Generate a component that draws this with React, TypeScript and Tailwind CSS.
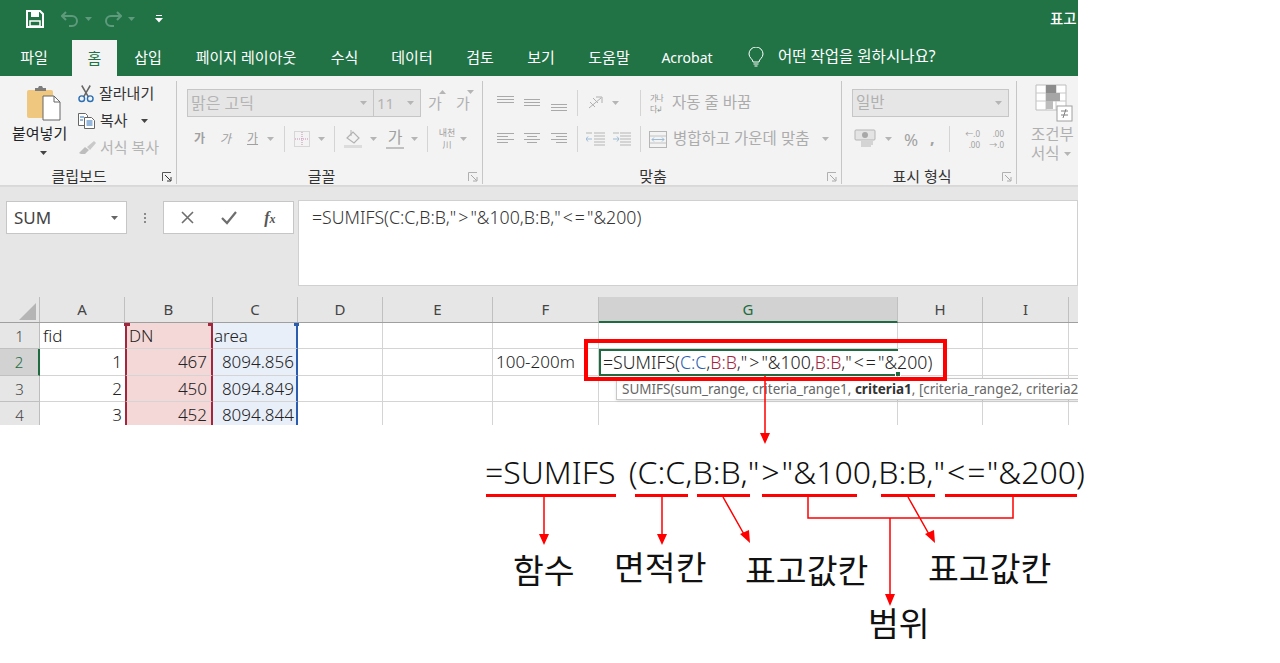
import type { ReactNode } from 'react';

const sans = 'font-["Noto_Sans","Noto_Sans_CJK_KR",sans-serif]';

function Caret({ className = 'text-[#b5b5b5]' }: { className?: string }) {
  return (
    <svg width="7" height="4" viewBox="0 0 7 4" className={`shrink-0 ${className}`}>
      <path d="M0 0h7L3.5 4z" fill="currentColor" />
    </svg>
  );
}

function Launcher({ dark = false }: { dark?: boolean }) {
  const c = dark ? '#555' : '#b0b0b0';
  return (
    <svg width="10" height="10" viewBox="0 0 10 10" className="shrink-0">
      <path d="M.5 9V.5H9" fill="none" stroke={c} />
      <path d="M3 3l5.5 5.5M9 5v4H5" fill="none" stroke={dark ? '#333' : '#a8a8a8'} />
    </svg>
  );
}

function Sep({ h = 'h-[26px]' }: { h?: string }) {
  return <div className={`w-px ${h} bg-[#d4d4d4] shrink-0`} />;
}

function Lines({ rows }: { rows: number[][] }) {
  return (
    <svg width="18" height="18" viewBox="0 0 18 18" className="shrink-0">
      {rows.map(([x, y, w], i) => (
        <rect key={i} x={x} y={y} width={w} height="1" fill="#a9a9a9" />
      ))}
    </svg>
  );
}

function Group({ width, label, dark, children, labelPad = 0 }: {
  width: string; label?: string; dark?: boolean; children: ReactNode; labelPad?: number;
}) {
  return (
    <div className={`${width} h-[103px] mt-[5px] shrink-0 border-r border-[#c6c6c6] flex flex-col`}>
      <div className="flex-1 min-h-0">{children}</div>
      <div className="h-[16px] flex items-center">
        <span className="flex-1 text-center text-[15px] leading-[16px] text-[#333]" style={{ paddingRight: labelPad }}>{label}</span>
        <span className="mr-[4px] mt-[2px]"><Launcher dark={dark} /></span>
      </div>
    </div>
  );
}

function ClipboardGroup() {
  return (
    <Group width="w-[177px]" label="클립보드" dark labelPad={4}>
      <div className="flex h-full">
        <div className="w-[75px] pl-[12px] flex flex-col">
          <svg width="36" height="36" viewBox="0 0 36 36" className="ml-[14px] mt-[4px]">
            <rect x="1" y="5" width="26" height="28" rx="2" fill="#efc77f" />
            <path d="M9 6V3h3l1-2h3l1 2h3v3z" fill="#7d7d7d" />
            <path d="M17 11h11l6 6v18H17z" fill="#fff" stroke="#666" />
            <path d="M28 11v6h6" fill="none" stroke="#666" />
          </svg>
          <div className="text-[15px] leading-[18px] mt-[3px] text-[#222] whitespace-nowrap">붙여넣기</div>
          <div className="ml-[28px] mt-[9px]"><Caret className="text-[#444]" /></div>
        </div>
        <div className="flex flex-col gap-[4px] ml-[3px] mt-[1px]">
          <div className="flex items-center gap-[5px] h-[23px] text-[15px] text-[#333]">
            <svg width="16" height="19" viewBox="0 0 17 19">
              <path d="M4 1l7 12M13 1L6 13" stroke="#666" strokeWidth="1.6" fill="none" />
              <circle cx="4" cy="15" r="3" fill="none" stroke="#2a6fb5" strokeWidth="1.5" />
              <circle cx="13" cy="15" r="3" fill="none" stroke="#2a6fb5" strokeWidth="1.5" />
            </svg>
            잘라내기
          </div>
          <div className="flex items-center gap-[5px] h-[23px] text-[15px] text-[#333]">
            <svg width="17" height="16" viewBox="0 0 17 16">
              <path d="M.5.5h7l2 2v10h-9z" fill="#fff" stroke="#666" />
              <path d="M6.5 4.5h7l3 3v8h-10z" fill="#fff" stroke="#666" />
              <path d="M2 4h4M2 7h3M8.500 8h6M8.500 10h6M8.500 12h6" stroke="#2a6fb5" />
            </svg>
            복사
            <span className="ml-[8px]"><Caret className="text-[#444]" /></span>
          </div>
          <div className="flex items-center gap-[3px] h-[23px] text-[15px] text-[#b4b4b4]">
            <svg width="19" height="15" viewBox="0 0 19 15">
              <path d="M1 13l6-6 4 3-4 4H3z" fill="#bdbdbd" />
              <path d="M9 7l7-6 2 2-6 7z" fill="#c9c9c9" />
            </svg>
            서식 복사
          </div>
        </div>
      </div>
    </Group>
  );
}

function FontGroup() {
  return (
    <Group width="w-[306px]" label="글꼴" labelPad={2}>
      <div className="pl-[10px] pt-[8px]">
        <div className="flex items-center h-[28px]">
          <div className="w-[187px] h-[28px] bg-[#e6e6e6] border border-[#c6c6c6] flex items-center justify-between px-[3px] pr-[6px] text-[16px] text-[#b4b4b4]">
            맑은 고딕<Caret />
          </div>
          <div className="w-[47px] h-[28px] bg-[#e6e6e6] border border-l-0 border-[#c6c6c6] flex items-center justify-between pl-[3px] pr-[6px] text-[15px] text-[#b4b4b4]">
            11<Caret />
          </div>
          <div className="flex items-center gap-[12px] ml-[7px] text-[#b0b0b0] text-[15px]">
            <span className="relative w-[16px]">가<span className="absolute -top-[2px] left-[11px]"><svg width="7" height="4" className="block"><path d="M0 4h7L3.500 0z" fill="#b5b5b5" /></svg></span></span>
            <span className="relative w-[16px]">가<span className="absolute -top-[2px] left-[11px]"><Caret /></span></span>
          </div>
        </div>
        <div className="flex items-center h-[28px] mt-[8px] text-[#a0a0a0] text-[12px]">
          <span className="ml-[7px] w-[12px] font-bold">가</span>
          <span className="ml-[14px] w-[12px] italic">가</span>
          <span className="ml-[15px] w-[13px] underline text-[12px]">가</span>
          <span className="ml-[7px]"><Caret /></span>
          <span className="ml-[10px]"><Sep /></span>
          <svg width="16" height="16" viewBox="0 0 16 16" className="ml-[9px]">
            <rect x=".5" y=".5" width="15" height="15" fill="none" stroke="#bbb" strokeDasharray="1 1" />
            <path d="M8 1v14M1 8h14" stroke="#c48fb0" strokeDasharray="1 1" />
          </svg>
          <span className="ml-[8px]"><Caret /></span>
          <span className="ml-[9px]"><Sep /></span>
          <svg width="19" height="20" viewBox="0 0 19 20" className="ml-[9px]">
            <path d="M3 9l6-6 6 6-5 5z" fill="none" stroke="#b2b2b2" strokeWidth="1.200" />
            <path d="M7 1v6" stroke="#b2b2b2" />
            <rect x="0" y="16" width="18" height="3" fill="#dcdcdc" />
          </svg>
          <span className="ml-[7px]"><Caret /></span>
          <span className="ml-[9px] flex flex-col items-center w-[18px] text-[16px] leading-[17px]">가<span className="w-full h-[2px] bg-[#c0c0c0] mt-[1px]" /></span>
          <span className="ml-[7px]"><Caret /></span>
          <span className="ml-[9px]"><Sep /></span>
          <span className="ml-[10px] w-[18px] text-[9px] leading-[12px] text-center">내천<br />川</span>
          <span className="ml-[4px]"><Caret /></span>
        </div>
      </div>
    </Group>
  );
}

function AlignGroup() {
  const top = [[0, 2, 17], [0, 5, 17], [0, 8, 17]];
  const mid = [[0, 5, 16], [0, 8, 16], [0, 11, 16]];
  const bot = [[0, 10, 16], [0, 13, 16], [0, 16, 16]];
  const l = [[0, 3, 17], [0, 6, 11], [0, 9, 17], [0, 12, 11]];
  const c = [[0, 3, 16], [3, 6, 10], [0, 9, 16], [3, 12, 10]];
  const r = [[0, 3, 16], [5, 6, 11], [0, 9, 16], [5, 12, 11]];
  return (
    <Group width="w-[359px]" label="맞춤" labelPad={4}>
      <div className="pl-[14px] pt-[8px] text-[15.5px] text-[#acacac]">
        <div className="flex items-center h-[28px]">
          <div className="flex gap-[9px] w-[80px]"><Lines rows={top} /><Lines rows={mid} /><Lines rows={bot} /></div>
          <Sep />
          <svg width="20" height="20" viewBox="0 0 20 20" className="ml-[9px]">
            <path d="M2 15L14 5M9 4h6v6M3 9l5 5M6 5l5 5" fill="none" stroke="#b0b0b0" />
          </svg>
          <span className="ml-[5px] w-[28px]"><Caret /></span>
          <Sep />
          <span className="ml-[9px] w-[16px] text-[8px] leading-[11px] tracking-[-1px] text-[#999] whitespace-nowrap overflow-hidden">가나<br />다↲</span>
          <span className="ml-[6px] whitespace-nowrap">자동 줄 바꿈</span>
        </div>
        <div className="flex items-center h-[28px] mt-[8px]">
          <div className="flex gap-[9px] w-[80px]"><Lines rows={l} /><Lines rows={c} /><Lines rows={r} /></div>
          <Sep />
          <svg width="45" height="16" viewBox="0 0 45 16" className="ml-[8px]">
            <path d="M8 2h11M8 5h11M8 8h11M8 11h11M8 14h11M34 2h11M34 5h11M34 8h11M34 11h11M34 14h11M0 2h6M27 2h6" stroke="#b5b5b5" />
            <path d="M0 8h6M2 5.500L0 8l2 2.500M27 8h6M31 5.500L33 8l-2 2.500" fill="none" stroke="#9dbbd6" />
          </svg>
          <span className="ml-[9px]"><Sep /></span>
          <svg width="18" height="17" viewBox="0 0 18 17" className="ml-[8px]">
            <rect x=".5" y=".5" width="17" height="16" fill="none" stroke="#b5b5b5" />
            <path d="M1 5h16M1 12h16" stroke="#c2c2c2" />
            <path d="M3 8.500h12M5 6.500l-2 2 2 2M13 6.500l2 2-2 2" fill="none" stroke="#9dbbd6" />
          </svg>
          <span className="ml-[6px] whitespace-nowrap">병합하고 가운데 맞춤</span>
          <span className="ml-[13px]"><Caret /></span>
        </div>
      </div>
    </Group>
  );
}

function NumberGroup() {
  return (
    <Group width="w-[175px]" label="표시 형식">
      <div className="pl-[10px] pt-[8px] text-[#b0b0b0]">
        <div className="w-[157px] h-[28px] bg-[#e6e6e6] border border-[#c6c6c6] flex items-center justify-between pl-[3px] pr-[6px] text-[15.5px]">
          일반<Caret />
        </div>
        <div className="flex items-center h-[28px] mt-[8px]">
          <svg width="24" height="20" viewBox="0 0 24 20" className="ml-[2px]">
            <rect x="1" y="1" width="20" height="10" rx="1" fill="#e4e4e4" stroke="#b5b5b5" />
            <circle cx="11" cy="6" r="3" fill="#a8a8a8" />
            <path d="M7 13h12M7 15h12M7 17h10" stroke="#b5b5b5" />
          </svg>
          <span className="ml-[7px]"><Caret /></span>
          <span className="ml-[12px] text-[17px] w-[20px] leading-none text-[#a2a2a2]">%</span>
          <span className="ml-[6px] w-[14px] text-[16px] font-bold leading-none -mt-[2px] text-[#a2a2a2]">,</span>
          <span className="ml-[5px]"><Sep /></span>
          <div className="ml-[9px] w-[21px] text-[8px] leading-[11px] text-right text-[#a0a0a0] whitespace-nowrap">←.0<br />.00</div>
          <div className="ml-[3px] w-[21px] text-[8px] leading-[11px] text-right text-[#a0a0a0] whitespace-nowrap">.00<br />→.0</div>
        </div>
      </div>
    </Group>
  );
}

function StylesGroup() {
  return (
    <div className="flex-1 h-[103px] mt-[5px] pl-[18px]">
      <svg width="38" height="38" viewBox="0 0 38 38" className="mt-[3px]">
        <path d="M1 1h30v25H1z" fill="#fff" stroke="#bdbdbd" />
        <path d="M1 9h30M1 17h30M11 1v25M21 1v25" stroke="#c8c8c8" />
        <rect x="11" y="1" width="10" height="8" fill="#8c8c8c" />
        <rect x="11" y="9" width="14" height="8" fill="#a6a6a6" />
        <rect x="11" y="17" width="7" height="8" fill="#bdbdbd" />
        <rect x="22" y="22" width="15" height="15" fill="#fff" stroke="#a0a0a0" />
        <path d="M26 27h7M26 31h7M31 25l-3 9" stroke="#808080" fill="none" />
      </svg>
      <div className="-ml-[4px] text-[15.5px] leading-[19px] mt-[3px] text-[#b0b0b0] whitespace-nowrap">조건부</div>
      <div className="-ml-[4px] text-[15.5px] leading-[19px] text-[#b0b0b0] flex items-center gap-[4px]">서식<Caret /></div>
    </div>
  );
}

const tabs: [string, string][] = [
  ['삽입', 'w-[62px]'],
  ['페이지 레이아웃', 'w-[134px]'],
  ['수식', 'w-[63px]'],
  ['데이터', 'w-[72px]'],
  ['검토', 'w-[64px]'],
  ['보기', 'w-[58px]'],
  ['도움말', 'w-[78px]'],
];

function Tabs() {
  return (
    <div className="flex items-center h-[38px] text-[15px] text-white">
      <div className="w-[72px] pr-[4px] text-center">파일</div>
      <div className="w-[45px] h-[36px] mt-[2px] bg-[#f3f3f3] text-[#217346] flex items-center justify-center">홈</div>
      {tabs.map(([t, w]) => (
        <div key={t} className={`${w} shrink-0 text-center whitespace-nowrap`}>{t}</div>
      ))}
      <div className="w-[78px] shrink-0 text-center text-[14px]">Acrobat</div>
      <svg width="16" height="20" viewBox="0 0 16 20" className="ml-[22px]">
        <path d="M5 15c0-3-4-4-4-8a7 7 0 0 1 14 0c0 4-4 5-4 8z" fill="none" stroke="#fff" />
        <path d="M5.500 17h5M6.500 19h3" stroke="#fff" />
      </svg>
      <div className="ml-[14px] whitespace-nowrap text-[15.5px]">어떤 작업을 원하시나요?</div>
    </div>
  );
}

function TitleBar() {
  return (
    <div className="h-[38px] flex items-center pl-[26px]">
      <svg width="18" height="18" viewBox="0 0 18 18">
        <path d="M1 1h13l3 3v13H1z" fill="none" stroke="#fff" strokeWidth="2" />
        <rect x="5" y="2" width="8" height="5" fill="#fff" />
        <rect x="4" y="11" width="10" height="5" fill="none" stroke="#fff" strokeWidth="1.500" />
      </svg>
      <svg width="18" height="16" viewBox="0 0 18 16" className="ml-[17px]">
        <path d="M5 1L1 5l4 4M1 5h10a5 5 0 0 1 0 10H8" fill="none" stroke="#5e9a7c" strokeWidth="2" />
      </svg>
      <span className="ml-[6px]"><Caret className="text-[#5e9a7c]" /></span>
      <svg width="18" height="16" viewBox="0 0 18 16" className="ml-[12px]">
        <path d="M13 1l4 4-4 4M17 5H7a5 5 0 0 0 0 10h3" fill="none" stroke="#5e9a7c" strokeWidth="2" />
      </svg>
      <span className="ml-[6px]"><Caret className="text-[#5e9a7c]" /></span>
      <svg width="8" height="8" viewBox="0 0 8 8" className="ml-[20px]">
        <path d="M1 .500h6" stroke="#fff" />
        <path d="M0 3h8L4 7.500z" fill="#fff" />
      </svg>
      <div className="ml-auto w-[28px] whitespace-nowrap text-[14.5px] text-white font-medium">표고</div>
    </div>
  );
}

function Formula({ colored }: { colored?: boolean }) {
  const blue = colored ? 'text-[#2a5db0]' : '';
  const red = colored ? 'text-[#a4263c]' : '';
  return (
    <>
      =SUMIFS(<span className={blue}>C:C</span>,<span className={red}>B:B</span>,"<span className="mx-[2px]">&gt;</span>"&amp;100,<span className={red}>B:B</span>,"<span className="mx-[2px]">&lt;</span><span className="mr-[2px]">=</span>"&amp;200)
    </>
  );
}

function FormulaBar() {
  return (
    <div className="h-[111px] bg-[#e6e6e6] flex pt-[14px] pl-[6px] border-t border-[#dadada]">
      <div className="w-[121px] h-[33px] bg-white border border-[#c6c6c6] flex items-center justify-between pl-[7px] pr-[8px] text-[17px] text-[#444]">
        SUM<Caret className="text-[#666]" />
      </div>
      <div className="w-[36px] h-[33px] flex flex-col items-center justify-center gap-[2px]">
        <span className="w-[2px] h-[2px] bg-[#8a8a8a]" /><span className="w-[2px] h-[2px] bg-[#8a8a8a]" /><span className="w-[2px] h-[2px] bg-[#8a8a8a]" />
      </div>
      <div className="w-[131px] h-[33px] bg-white border border-[#c6c6c6] flex items-center justify-around px-[4px]">
        <svg width="13" height="13" viewBox="0 0 13 13"><path d="M1 1l11 11M12 1L1 12" stroke="#6e6e6e" strokeWidth="1.600" /></svg>
        <svg width="16" height="14" viewBox="0 0 16 14"><path d="M1 7l5 5 9-11" fill="none" stroke="#6e6e6e" strokeWidth="2.200" /></svg>
        <span className="font-['Liberation_Serif',serif] italic font-bold text-[16px] text-[#555]">f<span className="text-[12px]">x</span></span>
      </div>
      <div className="ml-[4px] -mt-[1px] flex-1 h-[86px] bg-white border border-[#d0d0d0] pl-[13px] pt-[4px] text-[17.7px] font-[350] leading-[24px] text-[#333] whitespace-nowrap">
        <Formula />
      </div>
    </div>
  );
}

const cols: [string, string][] = [
  ['A', 'w-[85px]'], ['B', 'w-[88px]'], ['C', 'w-[85px]'], ['D', 'w-[85px]'], ['E', 'w-[110px]'],
  ['F', 'w-[106px]'], ['G', 'w-[299px]'], ['H', 'w-[85px]'], ['I', 'w-[86px]'], ['', 'w-[60px]'],
];

function Header() {
  return (
    <div className="flex h-[26px] bg-[#e6e6e6] border-b border-[#9f9f9f] text-[15px] text-[#444]">
      <div className="w-[40px] shrink-0 border-r border-[#bdbdbd] flex items-end justify-end pr-[3px] pb-[2px]">
        <svg width="17" height="17" viewBox="0 0 17 17"><path d="M17 0v17H0z" fill="#b5b5b5" /></svg>
      </div>
      {cols.map(([c, w]) => (
        <div key={w + c} className={`${w} shrink-0 flex items-center justify-center border-r border-[#c0c0c0] ${c === 'G' ? 'bg-[#d2d2d2] border-b-2 border-b-[#1e6b41] text-[#1e6b41] h-[26px]' : ''}`}>{c}</div>
      ))}
    </div>
  );
}

function Row({ n, h, a, b, c, f, g, active }: {
  n: number; h: string; a?: string; b: string; c: string; f?: string; g?: ReactNode; active?: boolean;
}) {
  const isText = n === 1;
  const line = 'border-b border-b-[#d4d4d4]';
  const plain = 'shrink-0 border-r border-b border-[#d4d4d4]';
  return (
    <div className={`flex ${h} text-[17px] font-[350] leading-[26px] text-[#222]`}>
      <div className={`w-[40px] shrink-0 flex items-center justify-center text-[15px] border-b border-b-[#c0c0c0] ${active ? 'bg-[#d2d2d2] text-[#1e6b41] border-r-2 border-r-[#1e6b41]' : 'bg-[#e6e6e6] text-[#444] border-r border-r-[#bdbdbd]'}`}>{n}</div>
      <div className={`w-[85px] shrink-0 ${line} ${isText ? 'pl-[3px]' : 'text-right pr-[3px]'}`}>{a}</div>
      <div className={`w-[88px] shrink-0 bg-[#f4d7d7] border-x-2 border-x-[#a4263c] relative ${line} ${isText ? 'pl-[2px]' : 'text-right pr-[4px]'}`}>
        {isText && <><span className="absolute -left-[3px] top-0 w-[6px] h-[3px] bg-[#a4263c]" /><span className="absolute -right-[3px] top-0 w-[6px] h-[3px] bg-[#a4263c]" /></>}
        {b}
      </div>
      <div className={`w-[85px] shrink-0 bg-[#e8eff9] border-r-2 border-r-[#2a5db0] relative ${line} ${isText ? 'pl-[1px]' : 'text-right pr-[2px]'}`}>
        {isText && <span className="absolute -right-[3px] top-0 w-[5px] h-[3px] bg-[#2a5db0]" />}
        {c}
      </div>
      <div className={`w-[85px] ${plain}`} />
      <div className={`w-[110px] ${plain}`} />
      <div className={`w-[106px] ${plain} pl-[3px] whitespace-nowrap`}>{f}</div>
      <div className={`w-[299px] shrink-0 relative ${active ? 'border-y-2 border-l-2 border-[#1e6b41] leading-[23px] pl-[2px] text-[17.7px] whitespace-nowrap' : 'border-r border-b border-[#d4d4d4]'}`}>
        {g}
        {active && <span className="absolute -right-[3px] -bottom-[3px] w-[6px] h-[6px] bg-[#1e6b41] border border-white" />}
      </div>
      <div className={`w-[85px] ${plain}`} />
      <div className={`w-[86px] ${plain}`} />
      <div className="w-[60px] shrink-0 border-b border-[#d4d4d4]" />
    </div>
  );
}

function Sheet() {
  return (
    <div className="flex-1 overflow-hidden relative bg-white">
      <Header />
      <Row n={1} h="h-[26px]" a="fid" b="DN" c="area" />
      <Row n={2} h="h-[27px]" a="1" b="467" c="8094.856" f="100-200m" g={<Formula colored />} active />
      <Row n={3} h="h-[26px]" a="2" b="450" c="8094.849" />
      <Row n={4} h="h-[26px]" a="3" b="452" c="8094.844" />
      <div className="absolute left-[616px] top-[81px] h-[22px] w-[520px] bg-white border border-[#c8c8c8] shadow-sm pl-[5px] text-[13.5px] leading-[20px] text-[#666] whitespace-nowrap">
        SUMIFS(sum_range, criteria_range1, <b className="text-[#333]">criteria1</b>, [criteria_range2, criteria2
      </div>
    </div>
  );
}

function Annotation() {
  const bars = [[486, 616], [635, 688], [697, 750], [762, 857], [881, 935], [945, 1077]];
  const labels: [string, number, number][] = [
    ['함수', 513, 548], ['면적칸', 614, 545], ['표고값칸', 745, 548], ['표고값칸', 928, 546], ['범위', 868, 601],
  ];
  return (
    <>
      <svg width="1280" height="663" className="absolute inset-0 pointer-events-none">
        {bars.map(([a, b]) => <rect key={a} x={a} y="494" width={b - a} height="3" fill="#f00" />)}
        <g stroke="#f00" strokeWidth="1.500" fill="none">
          <path d="M765 376V436M544 497V535M662 497V535M723 497L745 536M908 497L930 536M808 497V518H1013V497M890 518V595" />
        </g>
        <g fill="#f00">
          <path d="M760 433h10l-5 11zM539 534h10l-5 11zM657 534h10l-5 11zM885 594h10l-5 12z" />
          <path d="M740 534l9-4 1 13zM925 534l9-4 1 13z" />
        </g>
      </svg>
      <div className="absolute left-[584px] top-[339px] w-[363px] h-[42px] border-4 border-[#f00]" />
      <div className="absolute left-[485px] top-[450px] text-[32px] font-[350] leading-[44px] text-[#111] whitespace-nowrap">
        =SUMIFS <span className="ml-[5px]">(C:C,B:B,"<span className="mx-[2px]">&gt;</span>"&amp;100,B:B,"<span className="mx-[2px]">&lt;</span><span className="mr-[1px]">=</span>"&amp;200)</span>
      </div>
      {labels.map(([t, x, y]) => (
        <div key={x} className="absolute text-[33.500px] leading-[44px] text-[#111] whitespace-nowrap" style={{ left: x, top: y }}>{t}</div>
      ))}
    </>
  );
}

export default function App() {
  return (
    <div className={`relative w-[1280px] h-[663px] overflow-hidden bg-white ${sans}`}>
      <div className="w-[1078px] h-[425px] overflow-hidden flex flex-col">
        <div className="bg-[#217346]">
          <TitleBar />
          <Tabs />
        </div>
        <div className="h-[110px] bg-[#f3f3f3] flex shrink-0 border-b border-[#d8d8d8]">
          <ClipboardGroup />
          <FontGroup />
          <AlignGroup />
          <NumberGroup />
          <StylesGroup />
        </div>
        <FormulaBar />
        <Sheet />
      </div>
      <Annotation />
    </div>
  );
}
